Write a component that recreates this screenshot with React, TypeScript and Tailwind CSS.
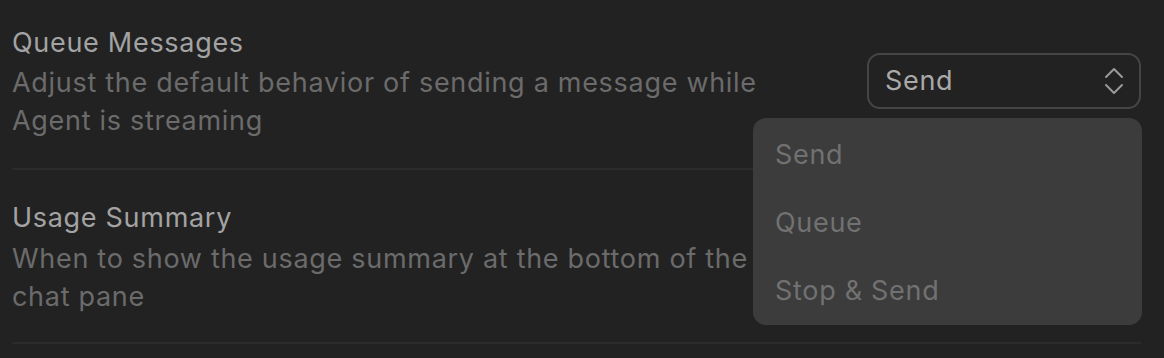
import { useState } from "react";

const options = ["Send", "Queue", "Stop & Send"];

function Chevrons() {
  return (
    <svg width="20" height="28" viewBox="0 0 20 28" fill="none" className="text-[#9a9a9a]">
      <path d="M2 10 L10 2 L18 10" stroke="currentColor" strokeWidth="2" strokeLinecap="round" strokeLinejoin="round" />
      <path d="M2 18 L10 26 L18 18" stroke="currentColor" strokeWidth="2" strokeLinecap="round" strokeLinejoin="round" />
    </svg>
  );
}

function QueueSelect() {
  const [value] = useState("Send");
  return (
    <div className="relative mt-[29px] shrink-0">
      <button className="w-[274px] h-[56px] flex items-center justify-between pl-4 pr-[15px] rounded-[13px] border-2 border-[#454545] text-[27px] leading-[38px] text-[#a9a9a9]">
        <span>{value}</span>
        <Chevrons />
      </button>
      {/* open menu */}
      <div className="absolute right-[-1px] top-[65px] w-[389px] pt-[3px] rounded-[13px] bg-[#3c3c3c] z-10">
        {options.map((o) => (
          <div key={o} className="h-[68px] flex items-center px-[22px] text-[27px] leading-[38px] text-[#717171]">
            {o}
          </div>
        ))}
      </div>
    </div>
  );
}

export default function App() {
  return (
    <div className="w-[1164px] h-[358px] overflow-hidden bg-[#222222] pl-3 pr-[23px] font-['Inter',sans-serif] tracking-[0.7px]">
      <div className="flex justify-between pt-6 pb-[28px] border-b-2 border-[#2b2b2b]">
        <div className="w-[775px]">
          <div className="text-[27px] leading-[38px] mb-[2px] text-[#a3a3a3]">Queue Messages</div>
          <div className="text-[27px] leading-[38px] text-[#6b6b6b]">
            Adjust the default behavior of sending a message while Agent is streaming
          </div>
        </div>
        <QueueSelect />
      </div>
      <div className="flex justify-between pt-[29px] pb-[26px] border-b-2 border-[#2b2b2b]">
        <div className="w-[775px]">
          <div className="text-[27px] leading-[38px] mb-[3px] text-[#a3a3a3]">Usage Summary</div>
          <div className="text-[27px] leading-[38px] text-[#6b6b6b]">
            When to show the usage summary at the bottom of the chat pane
          </div>
        </div>
      </div>
    </div>
  );
}
